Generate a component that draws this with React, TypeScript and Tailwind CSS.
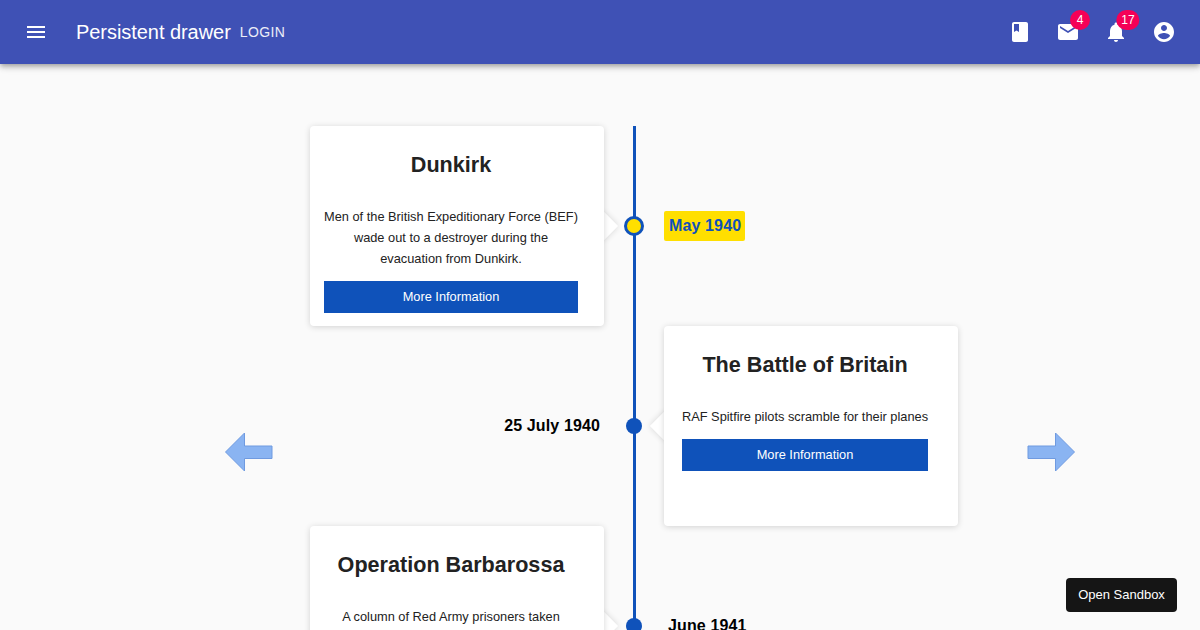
import type { ReactNode } from "react";

const iconPaths = {
  menu: "M3 18h18v-2H3v2zm0-5h18v-2H3v2zm0-7v2h18V6H3z",
  book: "M18 2H6c-1.1 0-2 .9-2 2v16c0 1.1.9 2 2 2h12c1.1 0 2-.9 2-2V4c0-1.1-.9-2-2-2zM6 4h5v8l-2.5-1.5L6 12V4z",
  mail: "M20 4H4c-1.1 0-1.99.9-1.99 2L2 18c0 1.1.9 2 2 2h16c1.1 0 2-.9 2-2V6c0-1.1-.9-2-2-2zm0 4l-8 5-8-5V6l8 5 8-5v2z",
  bell: "M12 22c1.1 0 2-.9 2-2h-4c0 1.1.89 2 2 2zm6-6v-5c0-3.07-1.64-5.64-4.5-6.32V4c0-.83-.67-1.5-1.5-1.5s-1.5.67-1.5 1.5v.68C7.63 5.36 6 7.92 6 11v5l-2 2v1h16v-1l-2-2z",
  account:
    "M12 2C6.48 2 2 6.48 2 12s4.48 10 10 10 10-4.48 10-10S17.52 2 12 2zm0 3c1.66 0 3 1.34 3 3s-1.34 3-3 3-3-1.34-3-3 1.34-3 3-3zm0 14.2c-2.5 0-4.71-1.28-6-3.22.03-1.99 4-3.08 6-3.08 1.99 0 5.97 1.09 6 3.08-1.29 1.94-3.5 3.22-6 3.22z",
};

function IconButton({ path, badge }: { path: string; badge?: string }) {
  return (
    <button className="relative flex h-12 w-12 items-center justify-center text-white">
      <svg viewBox="0 0 24 24" className="h-6 w-6 fill-current">
        <path d={path} />
      </svg>
      {badge && (
        <span className="absolute left-[36px] top-[12px] flex h-5 min-w-5 -translate-x-1/2 -translate-y-1/2 items-center justify-center rounded-full bg-[#f50057] px-[5px] text-xs leading-none">
          {badge}
        </span>
      )}
    </button>
  );
}

function TopBar() {
  return (
    <header className="relative z-10 flex h-16 shrink-0 items-center bg-[#3f51b5] pl-3 pr-3 text-white shadow-[0_2px_4px_-1px_rgba(0,0,0,0.2),0_4px_5px_0_rgba(0,0,0,0.14),0_1px_10px_0_rgba(0,0,0,0.12)]">
      <IconButton path={iconPaths.menu} />
      <h1 className="ml-4 text-xl leading-8 tracking-[-0.05px]">Persistent drawer</h1>
      <span className="ml-[9px] text-sm tracking-[0.4px] text-white/90">LOGIN</span>
      <div className="ml-auto flex">
        <IconButton path={iconPaths.book} />
        <IconButton path={iconPaths.mail} badge="4" />
        <IconButton path={iconPaths.bell} badge="17" />
        <IconButton path={iconPaths.account} />
      </div>
    </header>
  );
}

function Card({
  title,
  side,
  children,
}: {
  title: string;
  side: "left" | "right";
  children: ReactNode;
}) {
  return (
    <div className="relative h-[200px] w-[294px]">
      <div
        className={
          side === "left"
            ? "absolute right-[-10px] top-[90px] h-5 w-5 rotate-45 bg-white shadow-[0_0_6px_rgba(0,0,0,0.14)]"
            : "absolute left-[-10px] top-[90px] h-5 w-5 rotate-45 bg-white shadow-[0_0_6px_rgba(0,0,0,0.14)]"
        }
      />
      <div className="relative flex h-full flex-col items-center rounded-[4px] bg-white pl-[14px] pr-[26px] pt-6 text-[#222222] shadow-[0_1px_6px_rgba(0,0,0,0.16)]">
        <h2 className="mb-[26px] whitespace-nowrap text-[21.6px] font-bold leading-[30px]">
          {title}
        </h2>
        <div className="w-fit">{children}</div>
      </div>
    </div>
  );
}

function MoreButton() {
  return (
    <button className="mt-[12px] block h-8 w-full bg-[#0f52ba] text-[12.8px] text-white">
      More Information
    </button>
  );
}

function Body({ children }: { children: ReactNode }) {
  return (
    <p className="whitespace-nowrap text-center text-[12.8px] leading-[21px]">
      {children}
    </p>
  );
}

function Dot({ active }: { active?: boolean }) {
  return (
    <div
      className={
        active
          ? "z-10 h-5 w-5 rounded-full border-[3px] border-[#0f52ba] bg-[#ffdf00]"
          : "z-10 h-4 w-4 rounded-full bg-[#0f52ba]"
      }
    />
  );
}

function Row({
  side,
  card,
  date,
  active,
}: {
  side: "left" | "right";
  card: ReactNode;
  date: ReactNode;
  active?: boolean;
}) {
  return (
    <div className="grid h-[200px] grid-cols-[294px_60px_294px]">
      <div className="flex items-center justify-end">
        {side === "left" ? card : date}
      </div>
      <div className="flex items-center justify-center">
        <Dot active={active} />
      </div>
      <div className="flex items-center">{side === "left" ? date : card}</div>
    </div>
  );
}

function Arrow({ dir }: { dir: "left" | "right" }) {
  return (
    <svg viewBox="0 0 48 40" className="mt-[368px] h-10 w-12 shrink-0">
      <path
        d={
          dir === "left"
            ? "M0.5 20L19.5 1V14H47V26.5H19.5V39z"
            : "M47.5 20L28.5 1V14H1V26.5H28.5V39z"
        }
        fill="#8ab4f2"
        stroke="#6f9ae0"
      />
    </svg>
  );
}

function Timeline() {
  return (
    <div className="relative mx-[37px] mt-[62px] w-[648px] shrink-0">
      <div className="absolute bottom-0 left-[322.5px] top-0 w-[3px] bg-[#0f52ba]" />
      <Row
        side="left"
        active
        date={
          <span className="flex h-[30px] items-center rounded-[2px] bg-[#ffdf00] pl-[5px] pr-[4px] text-base font-bold tracking-[0.13px] text-[#0f52ba]">
            May 1940
          </span>
        }
        card={
          <Card title="Dunkirk" side="left">
            <Body>
              Men of the British Expeditionary Force (BEF)
              <br />
              wade out to a destroyer during the
              <br />
              evacuation from Dunkirk.
            </Body>
            <MoreButton />
          </Card>
        }
      />
      <Row
        side="right"
        date={
          <span className="mr-[4px] text-base font-bold tracking-[0.13px] text-black">
            25 July 1940
          </span>
        }
        card={
          <Card title="The Battle of Britain" side="right">
            <Body>RAF Spitfire pilots scramble for their planes</Body>
            <MoreButton />
          </Card>
        }
      />
      <Row
        side="left"
        date={
          <span className="ml-[4px] text-base font-bold tracking-[0.13px] text-black">
            June 1941
          </span>
        }
        card={
          <Card title="Operation Barbarossa" side="left">
            <Body>
              A column of Red Army prisoners taken
              <br />
              during the first days of the
              <br />
              German invasion
            </Body>
            <MoreButton />
          </Card>
        }
      />
    </div>
  );
}

export default function App() {
  return (
    <div className="relative flex h-[630px] w-[1200px] flex-col overflow-hidden bg-[#fafafa] font-['Liberation_Sans',Arial,sans-serif]">
      <TopBar />
      <main className="flex min-h-0 flex-1 items-start overflow-hidden pl-[225px]">
        <Arrow dir="left" />
        <Timeline />
        <div className="ml-[32px]">
          <Arrow dir="right" />
        </div>
      </main>
      <a className="absolute bottom-[18px] right-[23px] flex h-[34px] w-[111px] items-center justify-center rounded-[4px] bg-[#151515] text-[13px] text-white">
        Open Sandbox
      </a>
    </div>
  );
}
